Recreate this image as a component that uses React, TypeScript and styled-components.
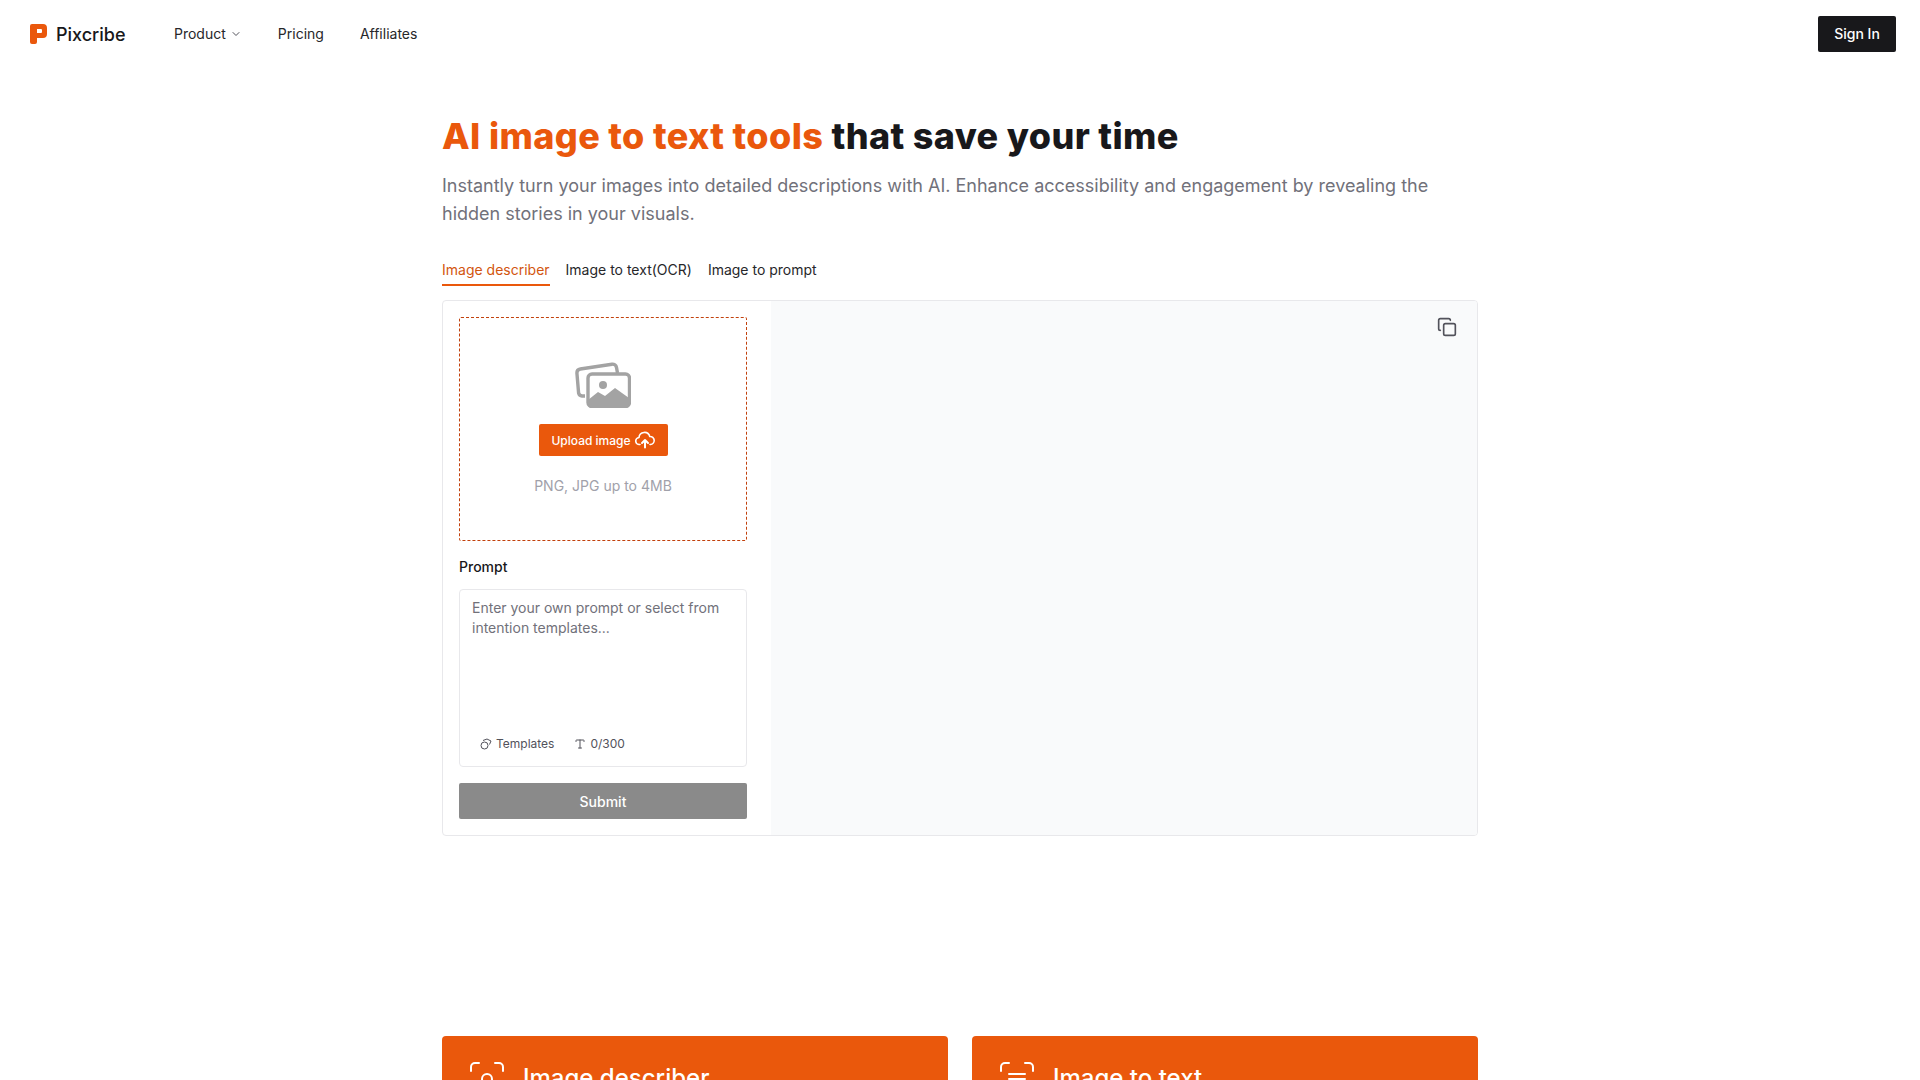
import React from "react";
import styled, { createGlobalStyle } from "styled-components";
import { ChevronDown, Copy, Type } from "lucide-react";

const GlobalStyle = createGlobalStyle`
  html, body {
    margin: 0;
    height: 1080px;
    overflow: hidden;
    background: #fff;
    font-family: Inter, "Liberation Sans", sans-serif;
    color: #18181b;
  }
  * { box-sizing: border-box; }
`;

const Header = styled.header`
  display: flex;
  align-items: center;
  justify-content: space-between;
  height: 68px;
  padding: 0 24px 0 30px;
`;

const HeaderLeft = styled.div`
  display: flex;
  align-items: center;
`;

const Brand = styled.a`
  display: flex;
  align-items: center;
  gap: 9px;
  width: 144px;
  font-size: 18px;
  font-weight: 500;
  color: #18181b;
`;

const Nav = styled.nav`
  display: flex;
  align-items: center;
  gap: 36px;
  margin-top: -1px;
`;

const NavItem = styled.a`
  display: flex;
  align-items: center;
  gap: 4px;
  font-size: 14px;
  color: #27272a;
`;

const SignIn = styled.button`
  width: 78px;
  height: 36px;
  padding: 0 0 1px;
  border: 0;
  border-radius: 2px;
  background: #18181b;
  color: #fff;
  font: 500 14px Inter, sans-serif;
`;

const Main = styled.main`
  width: 1036px;
  margin: 0 auto;
  padding-top: 46px;
`;

const Title = styled.h1`
  margin: 0;
  font-size: 36px;
  line-height: 44px;
  font-weight: 800;
  letter-spacing: 0.36px;
  color: #18181b;
`;

const Accent = styled.span`
  color: #ea580c;
`;

const Lead = styled.p`
  margin: 14px 0 0;
  font-size: 18px;
  line-height: 28px;
  color: #71717a;
`;

const Tabs = styled.div`
  display: flex;
  gap: 16px;
  margin-top: 26px;
`;

const Tab = styled.a<{ $active?: boolean }>`
  height: 32px;
  line-height: 32px;
  font-size: 14px;
  color: ${(p) => (p.$active ? "#d2560f" : "#27272a")};
  border-bottom: 2px solid ${(p) => (p.$active ? "#ea580c" : "transparent")};
`;

const Panel = styled.section`
  display: flex;
  height: 536px;
  margin-top: 14px;
  border: 1px solid #e8e8eb;
  border-radius: 4px;
  overflow: hidden;
`;

const FormColumn = styled.div`
  display: flex;
  flex-direction: column;
  width: 328px;
  flex: none;
  padding: 16px 24px 16px 16px;
`;

const Dropzone = styled.div`
  display: flex;
  flex-direction: column;
  align-items: center;
  height: 224px;
  padding-top: 44px;
  border: 1px dashed #c2410c;
  border-radius: 2px;
`;

const UploadButton = styled.button`
  display: flex;
  align-items: center;
  justify-content: center;
  gap: 4px;
  width: 129px;
  height: 32px;
  margin-top: 16px;
  padding: 0;
  border: 0;
  border-radius: 2px;
  background: #ea580c;
  color: #fff;
  font: 500 12px Inter, sans-serif;
`;

const Hint = styled.div`
  margin-top: 20px;
  font-size: 14px;
  line-height: 20px;
  color: #a1a1aa;
`;

const Label = styled.label`
  margin-top: 16px;
  font-size: 14px;
  line-height: 20px;
  font-weight: 500;
  color: #18181b;
`;

const PromptBox = styled.div`
  display: flex;
  flex-direction: column;
  justify-content: space-between;
  height: 178px;
  margin-top: 12px;
  padding: 8px 12px 14px;
  border: 1px solid #e8e8eb;
  border-radius: 4px;
`;

const Placeholder = styled.div`
  font-size: 14px;
  line-height: 20px;
  color: #71717a;
`;

const PromptTools = styled.div`
  display: flex;
  gap: 20px;
  padding-left: 8px;
`;

const ToolItem = styled.span`
  display: flex;
  align-items: center;
  gap: 4px;
  font-size: 12px;
  line-height: 16px;
  color: #52525b;
`;

const Submit = styled.button`
  height: 36px;
  margin-top: 16px;
  border: 0;
  border-radius: 2px;
  background: #8a8a8a;
  color: #fff;
  font: 500 14px Inter, sans-serif;
`;

const ResultColumn = styled.div`
  position: relative;
  flex: 1;
  background: #f9fafb;
`;

const CopyButton = styled.span`
  position: absolute;
  top: 16px;
  right: 20px;
  display: flex;
  color: #52525b;
`;

const Cards = styled.div`
  display: grid;
  grid-template-columns: 1fr 1fr;
  gap: 24px;
  margin-top: 200px;
`;

const Card = styled.div`
  display: flex;
  align-items: flex-start;
  gap: 19px;
  height: 200px;
  padding: 26px 28px;
  border-radius: 4px;
  background: #ea580c;
  color: #fff;
`;

const CardTitle = styled.h2`
  margin: 0;
  font-size: 24px;
  line-height: 32px;
  font-weight: 500;
`;

const Logo = () => (
  <svg width="17" height="20" viewBox="0 0 17 20">
    <path
      fill="#ea580c"
      fillRule="evenodd"
      d="M2 0h11a4 4 0 0 1 4 4v6a4 4 0 0 1-4 4H7v4a2 2 0 0 1-2 2H2a2 2 0 0 1-2-2V2a2 2 0 0 1 2-2Zm5 5v4h4a1 1 0 0 0 1-1V6a1 1 0 0 0-1-1Z"
    />
  </svg>
);

const PhotosIcon = () => (
  <svg width="56" height="46" viewBox="0 0 56 46">
    <path
      fill="none"
      stroke="#a3a3a3"
      strokeWidth="3.4"
      d="M10 34 7 34A4 4 0 0 1 3.600 31L1.900 11A4 4 0 0 1 5.300 7L37 2.200A4 4 0 0 1 41.500 5.500L42.500 11"
    />
    <rect x="13" y="12" width="41.500" height="32.500" rx="4" fill="none" stroke="#a3a3a3" strokeWidth="3.400" />
    <circle cx="28" cy="23" r="4" fill="#a3a3a3" />
    <path fill="#a3a3a3" d="M13 38 23 30 30 34 40 26 54 36V42A4 4 0 0 1 50 46H17A4 4 0 0 1 13 42Z" />
  </svg>
);

const CloudIcon = () => (
  <svg width="20" height="18" viewBox="0 0 20 18" fill="none" stroke="#fff" strokeWidth="1.600" strokeLinecap="round" strokeLinejoin="round">
    <path d="M5 13.500H4.500A3.500 3.500 0 0 1 4 6.500 5.500 5.500 0 0 1 14.800 5.500 4 4 0 0 1 15.500 13.500H15" />
    <path strokeWidth="2" d="M10 16.500V9.500M7 12l3-3 3 3" />
  </svg>
);

const TemplatesIcon = () => (
  <svg width="12" height="12" viewBox="0 0 12 12" fill="none" stroke="#52525b" strokeWidth="1">
    <circle cx="4.500" cy="7.500" r="3.500" />
    <path d="M3 2.500 7 1l4 2-1.500 3.500" />
  </svg>
);

const ScanIcon = ({ lines }: { lines?: boolean }) => (
  <svg width="34" height="34" viewBox="0 0 34 34" fill="none" stroke="#fff" strokeWidth="2" strokeLinecap="round">
    <path d="M1 9V5a4 4 0 0 1 4-4h4M25 1h4a4 4 0 0 1 4 4v4M1 25v4a4 4 0 0 0 4 4h4M25 33h4a4 4 0 0 0 4-4v-4" />
    {lines ? (
      <path d="M9 12h16M9 17h16M9 22h16" />
    ) : (
      <circle cx="17" cy="17" r="5" />
    )}
  </svg>
);

export default function App() {
  return (
    <>
      <GlobalStyle />
      <Header>
        <HeaderLeft>
          <Brand>
            <Logo />
            Pixcribe
          </Brand>
          <Nav>
            <NavItem>
              Product <ChevronDown size={12} color="#52525b" />
            </NavItem>
            <NavItem>Pricing</NavItem>
            <NavItem>Affiliates</NavItem>
          </Nav>
        </HeaderLeft>
        <SignIn>Sign In</SignIn>
      </Header>
      <Main>
        <Title>
          <Accent>AI image to text tools</Accent> that save your time
        </Title>
        <Lead>
          Instantly turn your images into detailed descriptions with AI. Enhance accessibility and engagement by revealing the hidden stories in your visuals.
        </Lead>
        <Tabs>
          <Tab $active>Image describer</Tab>
          <Tab>Image to text(OCR)</Tab>
          <Tab>Image to prompt</Tab>
        </Tabs>
        <Panel>
          <FormColumn>
            <Dropzone>
              <PhotosIcon />
              <UploadButton>
                Upload image <CloudIcon />
              </UploadButton>
              <Hint>PNG, JPG up to 4MB</Hint>
            </Dropzone>
            <Label>Prompt</Label>
            <PromptBox>
              <Placeholder>Enter your own prompt or select from intention templates...</Placeholder>
              <PromptTools>
                <ToolItem>
                  <TemplatesIcon /> Templates
                </ToolItem>
                <ToolItem>
                  <Type size={12} /> 0/300
                </ToolItem>
              </PromptTools>
            </PromptBox>
            <Submit>Submit</Submit>
          </FormColumn>
          <ResultColumn>
            <CopyButton>
              <Copy size={20} />
            </CopyButton>
          </ResultColumn>
        </Panel>
        <Cards>
          <Card>
            <ScanIcon />
            <CardTitle>Image describer</CardTitle>
          </Card>
          <Card>
            <ScanIcon lines />
            <CardTitle>Image to text</CardTitle>
          </Card>
        </Cards>
      </Main>
    </>
  );
}
